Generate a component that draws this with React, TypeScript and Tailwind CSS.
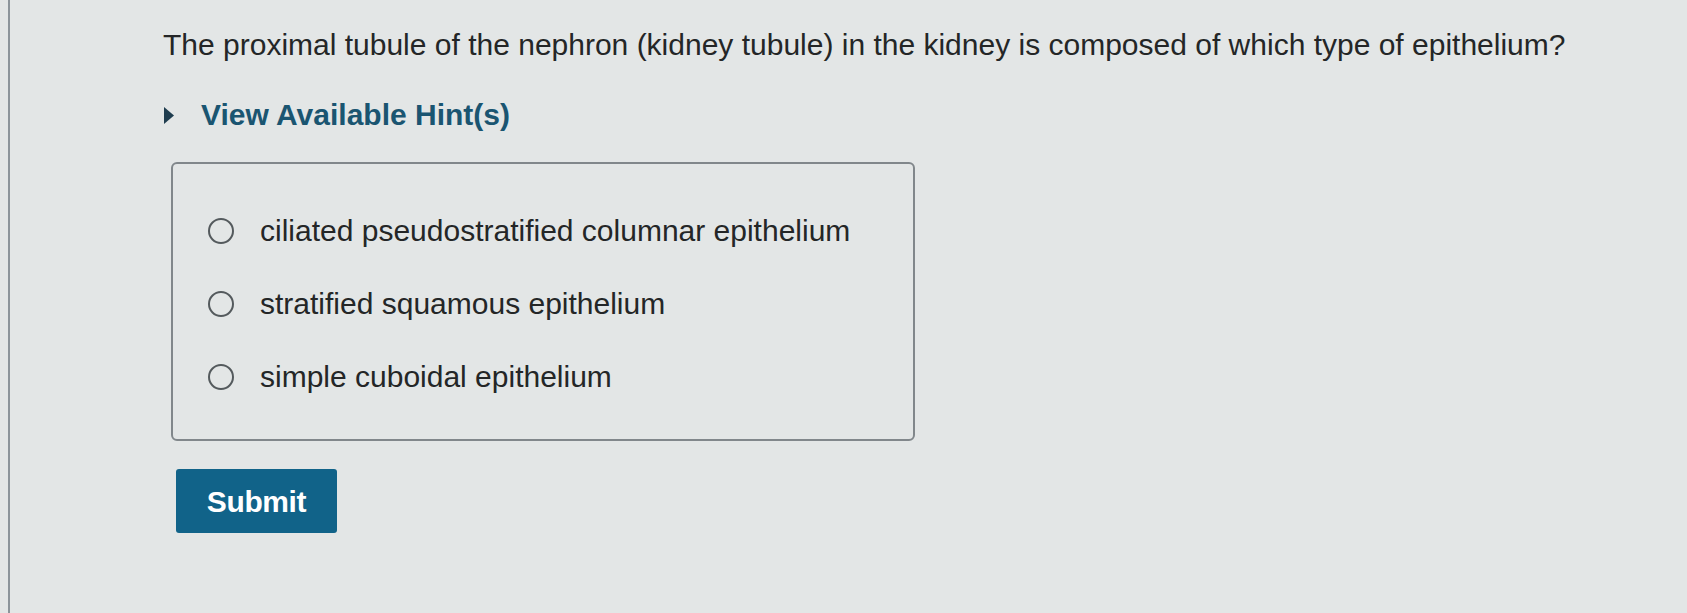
import React, { useState } from "react";

const options = [
  "ciliated pseudostratified columnar epithelium",
  "stratified squamous epithelium",
  "simple cuboidal epithelium",
];

export default function App() {
  const [picked, setPicked] = useState<number | null>(null);

  return (
    <div className="h-[613px] w-full overflow-hidden bg-[#e3e6e6] font-['Liberation_Sans',Arial,sans-serif] text-[#242627]">
      <div className="ml-[8px] h-full border-l-2 border-[#8c949a] pl-[153px] pt-[27px]">
        <p className="whitespace-nowrap text-[30px] leading-[36px]">
          The proximal tubule of the nephron (kidney tubule) in the kidney is composed of which type of epithelium?
        </p>

        <button className="mt-[35px] flex items-center gap-[26px] text-[#1a5571]">
          <svg width="12" height="19" viewBox="0 0 12 19">
            <path d="M1 1 L11 9.5 L1 18 Z" fill="#1f3d4f" />
          </svg>
          <span className="text-[30px] font-bold leading-[34px]">View Available Hint(s)</span>
        </button>

        <div className="mt-[30px] ml-[8px] w-[744px] rounded-[6px] border-2 border-[#81878b] pt-[51px] pb-[46px] pl-[35px]">
          <div className="flex flex-col gap-[41px]">
            {options.map((o, i) => (
              <label key={o} className="flex cursor-pointer items-center gap-[26px]" onClick={() => setPicked(i)}>
                <span className="flex h-[26px] w-[26px] shrink-0 items-center justify-center rounded-full border-2 border-[#545a5d]">
                  {picked === i && <span className="h-[12px] w-[12px] rounded-full bg-[#1a5571]" />}
                </span>
                <span className="text-[30px] leading-[32px]">{o}</span>
              </label>
            ))}
          </div>
        </div>

        <button className="mt-[28px] ml-[13px] h-[64px] w-[161px] rounded-[3px] bg-[#116389] text-[30px] font-bold tracking-[-0.4px] text-white">
          Submit
        </button>
      </div>
    </div>
  );
}
